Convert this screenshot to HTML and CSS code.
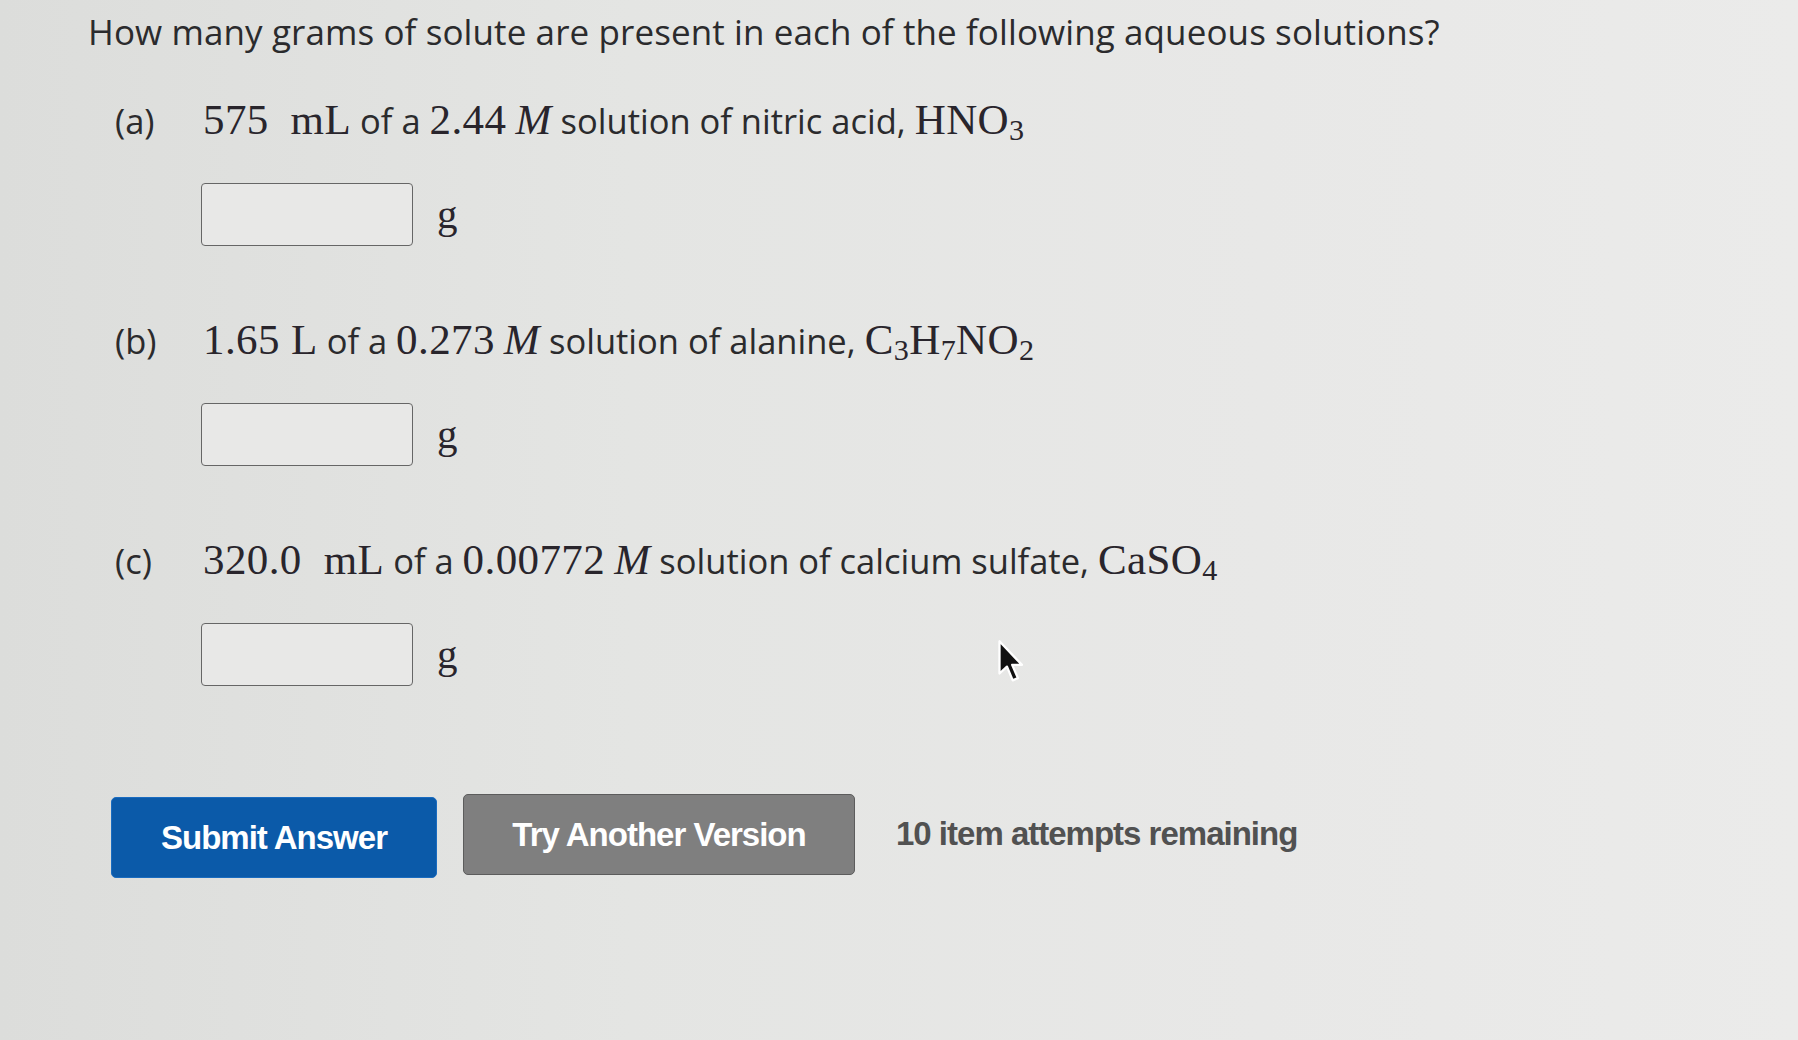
FILE: index.html
```html
<!DOCTYPE html>
<html lang="en">
<head>
<meta charset="utf-8">
<title>Grams of solute</title>
<link rel="stylesheet" href="styles.css">
</head>
<body>
<main class="page">
  <h1 class="question">How many grams of solute are present in each of the following aqueous solutions?</h1>
  <ol class="parts">
    <li class="part">
      <div class="prompt">
        <span class="label">(a)</span>
        <span class="text"><span class="m">575&#8194;mL</span> of a <span class="m">2.44</span> <span class="m mi">M</span> solution of nitric acid, <span class="m">HNO<sub>3</sub></span></span>
      </div>
      <div class="answer"><span class="box"></span><span class="unit">g</span></div>
    </li>
    <li class="part">
      <div class="prompt">
        <span class="label">(b)</span>
        <span class="text"><span class="m">1.65 L</span> of a <span class="m">0.273</span> <span class="m mi">M</span> solution of alanine, <span class="m">C<sub>3</sub>H<sub>7</sub>NO<sub>2</sub></span></span>
      </div>
      <div class="answer"><span class="box"></span><span class="unit">g</span></div>
    </li>
    <li class="part">
      <div class="prompt">
        <span class="label">(c)</span>
        <span class="text"><span class="m">320.0&#8194;mL</span> of a <span class="m">0.00772</span> <span class="m mi">M</span> solution of calcium sulfate, <span class="m">CaSO<sub>4</sub></span></span>
      </div>
      <div class="answer"><span class="box"></span><span class="unit">g</span></div>
    </li>
  </ol>
  <div class="actions">
    <button class="btn btn-primary" type="button">Submit Answer</button>
    <button class="btn btn-secondary" type="button">Try Another Version</button>
    <span class="attempts">10 item attempts remaining</span>
  </div>
  <svg class="cursor" width="28" height="46" viewBox="0 0 24 40" aria-hidden="true">
    <path d="M2 2 L2 30 L8.5 24 L13.5 36 L18 34 L13 22.5 L21.5 22.5 Z" fill="#111" stroke="#fff" stroke-width="2" stroke-linejoin="round"/>
  </svg>
</main>
</body>
</html>
```

FILE: styles.css
```css
html, body {
  margin: 0;
  padding: 0;
}

body {
  width: 1798px;
  height: 1040px;
  overflow: hidden;
  background: linear-gradient(90deg, #dcdddb 0%, #e4e5e3 35%, #e8e8e7 70%, #ebebea 100%);
  font-family: "Open Sans", "Noto Sans", sans-serif;
  color: #2b2b2d;
}

.page {
  position: relative;
  height: 100%;
  box-sizing: border-box;
  padding: 12px 0 0 88px;
}

.question {
  margin: 0;
  font-size: 35px;
  font-weight: 400;
  line-height: 40px;
  letter-spacing: 0.1px;
}

.parts {
  list-style: none;
  margin: 46px 0 0 0;
  padding: 0 0 0 27px;
  display: flex;
  flex-direction: column;
  gap: 72px;
}

.part {
  display: flex;
  flex-direction: column;
  gap: 40px;
}

.prompt {
  display: flex;
  align-items: baseline;
  font-size: 34.5px;
  line-height: 44px;
  white-space: nowrap;
}

.label {
  width: 88px;
  flex: none;
}

.m {
  font-family: "Liberation Serif", "Times New Roman", serif;
  font-size: 43px;
  letter-spacing: 0.4px;
  color: #29252c;
}

.mi {
  font-style: italic;
}

.m sub {
  font-size: 0.7em;
  line-height: 0;
  vertical-align: -0.2em;
}

.answer {
  display: flex;
  align-items: center;
  gap: 24px;
  padding-left: 86px;
}

.box {
  width: 212px;
  height: 63px;
  box-sizing: border-box;
  border: 1.5px solid #666666;
  border-radius: 4px;
  background: #e8e8e7;
}

.unit {
  font-family: "Liberation Serif", "Times New Roman", serif;
  font-size: 41px;
  color: #29252c;
  line-height: 1;
}

.actions {
  display: flex;
  align-items: center;
  margin-top: 111px;
  padding-left: 23px;
}

.btn {
  font-family: "Liberation Sans", Arial, sans-serif;
  font-weight: 700;
  font-size: 33px;
  letter-spacing: -1px;
  color: #ffffff;
  height: 81px;
  border-radius: 5px;
  cursor: pointer;
  padding: 0;
}

.btn-primary {
  width: 326px;
  background: #0b5aa9;
  border: 1px solid #1a6cc0;
  margin-right: 26px;
}

.btn-secondary {
  width: 392px;
  background: #7f7f7f;
  border: 1.5px solid #5c5c5c;
  margin-top: -6px;
  margin-right: 41px;
}

.attempts {
  font-family: "Liberation Sans", Arial, sans-serif;
  font-weight: 700;
  font-size: 33px;
  letter-spacing: -1px;
  color: #515151;
  margin-top: -8px;
}

.cursor {
  position: absolute;
  left: 997px;
  top: 639px;
}
```
